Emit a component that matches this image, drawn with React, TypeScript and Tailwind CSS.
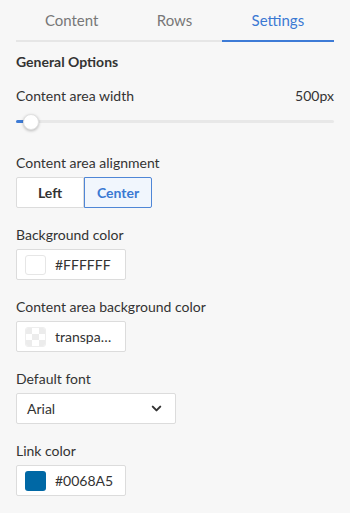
import { ChevronDown } from 'lucide-react';

const BLUE = 'text-[#3b79d3]';

function Label({ children }: { children: React.ReactNode }) {
    return <div className="text-[14px] leading-[18px] text-[#333333]">{children}</div>;
}

function ColorField({ swatch, value }: { swatch: React.ReactNode; value: string }) {
    return (
        <div className="mt-[5px] flex h-[31px] w-[110px] items-center rounded-[2px] border border-[#dcdcdc] bg-white pl-[8px] pr-[6px]">
            {swatch}
            <span className="ml-[9px] whitespace-nowrap text-[14px] text-[#333333]">{value}</span>
        </div>
    );
}

function Checker() {
    return (
        <div className="grid h-[20px] w-[21px] shrink-0 grid-cols-3 grid-rows-3 overflow-hidden rounded-[3px] border border-[#eeeeee]">
            {[0, 1, 2, 3, 4, 5, 6, 7, 8].map((i) => (
                <div key={i} className={i % 2 === 0 ? 'bg-[#ececec]' : 'bg-white'} />
            ))}
        </div>
    );
}

export default function App() {
    return (
        <div className="min-h-[513px] w-[350px] bg-[#f7f7f7] px-[16px] font-['Lato',sans-serif]">
            {/* tabs */}
            <div className="flex h-[42px] text-[15px]">
                <div className="flex w-[112px] items-center justify-center border-b-2 border-[#e6e6e6] text-[#777777]">Content</div>
                <div className="flex w-[95px] items-center justify-center border-b-2 border-[#e6e6e6] text-[#777777]">Rows</div>
                <div className={`flex w-[113px] items-center justify-center border-b-2 border-[#3d7bd6] ${BLUE}`}>Settings</div>
            </div>

            <div className="mt-[11px] text-[14px] font-bold leading-[18px] text-[#333333]">General Options</div>

            <div className="mt-[14px] flex items-center justify-between">
                <Label>Content area width</Label>
                <span className="text-[14px] text-[#333333]">500px</span>
            </div>

            {/* slider */}
            <div className="relative mt-[8px] h-[16px]">
                <div className="absolute left-0 right-0 top-[6px] h-[3px] rounded-full bg-[#e8e8e8]" />
                <div className="absolute left-0 top-[6px] h-[3px] w-[14px] rounded-full bg-[#3d7bd6]" />
                <div className="absolute left-[7px] top-0 h-[16px] w-[16px] rounded-full border border-[#e2e2e2] bg-white shadow-[0_1px_3px_rgba(0,0,0,0.25)]" />
            </div>

            <div className="mt-[24px]">
                <Label>Content area alignment</Label>
                <div className="mt-[5px] flex">
                    <button className="h-[31px] w-[68px] rounded-l-[2px] border border-[#dcdcdc] bg-white text-[14px] font-bold text-[#333333]">Left</button>
                    <button className={`h-[31px] w-[68px] rounded-r-[2px] border border-[#4f86d6] bg-[#f1f6fd] text-[14px] font-bold ${BLUE}`}>Center</button>
                </div>
            </div>

            <div className="mt-[18px]">
                <Label>Background color</Label>
                <ColorField swatch={<div className="h-[20px] w-[21px] shrink-0 rounded-[3px] border border-[#e6e6e6] bg-white" />} value="#FFFFFF" />
            </div>

            <div className="mt-[18px]">
                <Label>Content area background color</Label>
                <ColorField swatch={<Checker />} value="transpa…" />
            </div>

            <div className="mt-[18px]">
                <Label>Default font</Label>
                <div className="mt-[5px] flex h-[31px] w-[160px] items-center justify-between rounded-[2px] border border-[#dcdcdc] bg-white pl-[10px] pr-[11px]">
                    <span className="text-[14px] text-[#333333]">Arial</span>
                    <ChevronDown size={15} strokeWidth={3.25} className="text-[#333333]" />
                </div>
            </div>

            <div className="mt-[18px]">
                <Label>Link color</Label>
                <ColorField swatch={<div className="h-[20px] w-[21px] shrink-0 rounded-[3px] bg-[#0068A5]" />} value="#0068A5" />
            </div>
        </div>
    );
}
